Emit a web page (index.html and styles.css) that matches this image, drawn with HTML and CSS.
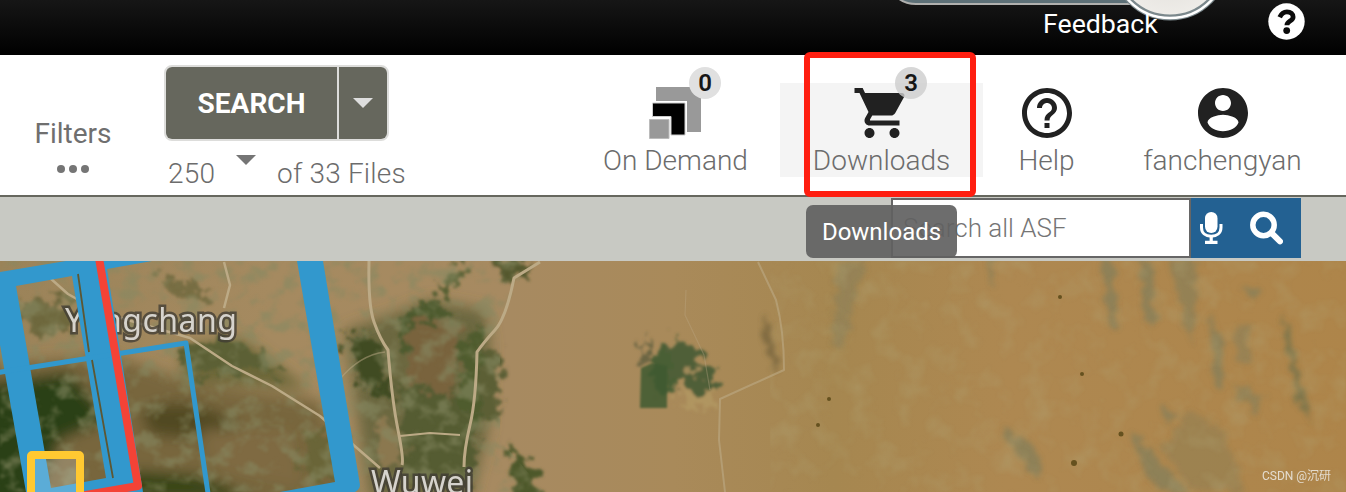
FILE: index.html
```
<!DOCTYPE html>
<html lang="en">

<head>
    <meta charset="UTF-8">
    <meta name="viewport" content="width=device-width, initial-scale=1.0">
    <title>ASF Data Search</title>
    <link rel="stylesheet" href="styles.css">
</head>

<body>
    <div class="topbar">
        <svg class="topbar-art" width="340" height="24" viewBox="890 0 340 24">
            <defs>
                <radialGradient id="knob">
                    <stop offset="0" stop-color="#dedbd6" />
                    <stop offset="1" stop-color="#efede9" />
                </radialGradient>
            </defs>
            <path d="M898 -2Q905 4 916 4H1150V-2Z" fill="#5d7077" stroke="#b0b0ae" stroke-width="2" />
            <circle cx="1170" cy="-39" r="56.500" fill="url(#knob)" stroke="#7b888c" stroke-width="6" />
            <circle cx="1170" cy="-39" r="57" fill="none" stroke="#fff" stroke-width="2.500" />
        </svg>
        <a class="feedback">Feedback</a>
        <svg class="top-help" width="37" height="37" viewBox="0 0 37 37">
            <circle cx="18.500" cy="18.500" r="18.200" fill="#fff" />
            <path d="M11.700 14.200Q14.200 8.800 18.900 8.800C22.800 8.800 25.100 11.200 25.100 14C25.100 18.300 18.900 17.800 18.900 22.300" fill="none" stroke="#0b0b0b" stroke-width="4.800" />
            <circle cx="18.700" cy="27.600" r="3.400" fill="#0b0b0b" />
        </svg>
    </div>

    <header>
        <div class="filters">
            <span>Filters</span>
            <div class="dots"><i></i><i></i><i></i></div>
        </div>
        <div class="search-block">
            <div class="search-btn">
                <button class="search-main">SEARCH</button>
                <button class="search-more"><span class="caret"></span></button>
            </div>
            <div class="file-count">
                <span class="max">250</span>
                <span class="caret caret-dark"></span>
                <span class="total">of 33 Files</span>
            </div>
        </div>
        <nav>
            <a class="nav-item">
                <svg width="60" height="60" viewBox="0 0 60 60">
                    <path d="M10 4H55V49H41V18H10Z" fill="#999" />
                    <path d="M6.500 20H39V52H25V33.500H6.500Z" fill="#000" stroke="#ccc" />
                    <path d="M3.500 36.500H23V55.500H3.500Z" fill="#999" stroke="#bbb" />
                </svg>
                <span class="label">On Demand</span>
                <span class="badge">0</span>
            </a>
            <a class="nav-item active">
                <svg width="60" height="60" viewBox="0 0 24 24" fill="#212121">
                    <path d="M7 18c-1.100 0-1.990.9-1.990 2S5.900 22 7 22s2-.9 2-2-.9-2-2-2zM1 2v2h2l3.600 7.590-1.350 2.450c-.16.28-.25.61-.25.960 0 1.100.9 2 2 2h12v-2H7.420c-.14 0-.25-.11-.25-.25l.03-.12.9-1.630h7.450c.75 0 1.410-.41 1.750-1.030l3.580-6.490c.08-.14.12-.31.12-.48 0-.55-.45-1-1-1H5.210l-.94-2H1zm16 16c-1.100 0-1.990.9-1.990 2s.89 2 1.990 2 2-.9 2-2-.9-2-2-2z" />
                </svg>
                <span class="label">Downloads</span>
                <span class="badge">3</span>
                <span class="marker"></span>
                <span class="tooltip">Downloads</span>
            </a>
            <a class="nav-item">
                <svg width="60" height="60" viewBox="0 0 24 24" fill="#212121">
                    <path d="M11 18h2v-2h-2v2zm1-16C6.480 2 2 6.480 2 12s4.480 10 10 10 10-4.480 10-10S17.520 2 12 2zm0 18c-4.410 0-8-3.590-8-8s3.590-8 8-8 8 3.590 8 8-3.590 8-8 8zm0-14c-2.210 0-4 1.790-4 4h2c0-1.100.9-2 2-2s2 .9 2 2c0 2-3 1.750-3 5h2c0-2.250 3-2.500 3-5 0-2.210-1.790-4-4-4z" />
                </svg>
                <span class="label">Help</span>
            </a>
            <a class="nav-item">
                <svg width="60" height="60" viewBox="0 0 24 24" fill="#212121">
                    <path d="M12 2C6.480 2 2 6.480 2 12s4.480 10 10 10 10-4.480 10-10S17.520 2 12 2zm0 2.800c1.770 0 3.200 1.430 3.200 3.200s-1.430 3.200-3.200 3.200-3.200-1.430-3.200-3.200 1.430-3.200 3.200-3.200zm0 14.500c-3 0-5.500-1.500-6.200-3.500 0-2 4-3.100 6.200-3.100s6.200 1.100 6.200 3.100c-.7 2-3.200 3.500-6.200 3.500z" />
                </svg>
                <span class="label">fanchengyan</span>
            </a>
        </nav>
    </header>

    <div class="subbar">
        <div class="site-search">
            <div class="search-input">Search all ASF</div>
            <div class="search-icons">
                <svg width="24" height="34" viewBox="0 0 24 34">
                    <rect x="6" y="1" width="12.500" height="21" rx="6.200" fill="#fff" />
                    <path d="M2.500 13V16.500C2.500 22 6.500 25.300 12.200 25.300S22 22 22 16.500V13" fill="none" stroke="#fff" stroke-width="3" />
                    <path d="M12.200 25V31M6 31.300H18.500" stroke="#fff" stroke-width="3.200" fill="none" />
                </svg>
                <svg width="34" height="34" viewBox="0 0 34 34" fill="none" stroke="#fff">
                    <circle cx="14.500" cy="14" r="10.700" stroke-width="5.500" />
                    <path d="M22.500 22L31 30.300" stroke-width="6" stroke-linecap="round" />
                </svg>
            </div>
        </div>
    </div>

    <svg class="map" width="1346" height="231" viewBox="0 261 1346 231">
        <defs>
            <linearGradient id="sand">
                <stop offset="0" stop-color="#9b8359" />
                <stop offset=".2" stop-color="#a58a60" />
                <stop offset=".38" stop-color="#a78a61" />
                <stop offset=".5" stop-color="#a98a5a" />
                <stop offset=".62" stop-color="#a68750" />
                <stop offset=".75" stop-color="#ae8851" />
                <stop offset="1" stop-color="#ae854a" />
            </linearGradient>
            <filter id="rough" x="-20%" y="-20%" width="140%" height="140%">
                <feTurbulence type="fractalNoise" baseFrequency=".09" numOctaves="4" seed="4" />
                <feDisplacementMap in="SourceGraphic" scale="34" xChannelSelector="R" yChannelSelector="G" />
                <feGaussianBlur stdDeviation="1.600" />
            </filter>
            <filter id="lake" x="-30%" y="-20%" width="160%" height="140%">
                <feTurbulence type="fractalNoise" baseFrequency=".09" numOctaves="3" seed="9" />
                <feDisplacementMap in="SourceGraphic" scale="16" xChannelSelector="R" yChannelSelector="G" />
                <feGaussianBlur stdDeviation="2.400" />
            </filter>
            <filter id="soft" x="-20%" y="-20%" width="140%" height="140%">
                <feGaussianBlur stdDeviation="7" />
            </filter>
            <!-- dark speckles, used over the fields and hills -->
            <filter id="speckle" x="0" y="0" width="100%" height="100%">
                <feTurbulence type="fractalNoise" baseFrequency=".05 .06" numOctaves="5" seed="21" />
                <feColorMatrix values="0 0 0 0 .24  0 0 0 0 .25  0 0 0 0 .12  4 0 0 0 -1.900" />
                <feGaussianBlur stdDeviation=".9" />
                <feComposite in2="SourceGraphic" operator="in" />
            </filter>
            <filter id="grain" x="0" y="0" width="100%" height="100%">
                <feTurbulence type="fractalNoise" baseFrequency=".04" numOctaves="4" seed="7" />
                <feColorMatrix values="0 0 0 0 .45  0 0 0 0 .4  0 0 0 0 .2  1.500 0 0 0 -.7" />
                <feGaussianBlur stdDeviation="1.200" />
                <feComposite in2="SourceGraphic" operator="in" />
            </filter>
        </defs>

        <rect x="0" y="261" width="1346" height="231" fill="url(#sand)" />

        <!-- hills on the left -->
        <g filter="url(#soft)">
            <path d="M-20 365L110 355 200 385 320 400 360 520H-20Z" fill="#78663e" />
            <path d="M-20 385L70 372 110 420 60 440 30 510H-20Z" fill="#2c3f13" />
            <path d="M140 410Q190 390 240 425L200 440 150 435Z" fill="#514820" />
            <path d="M130 470L200 475 260 500H130Z" fill="#394519" />
            <path d="M200 430H290L300 485 220 470Z" fill="#7f6a42" />
            <path d="M345 330L390 315 430 300 485 310 490 340 488 430 470 500H370Z" fill="#6c673f" />
            <path d="M180 348L240 338 310 390 250 385 185 382Z" fill="#6b6639" />
        </g>

        <!-- farmland -->
        <g filter="url(#rough)">
            <path d="M20 302L75 300 72 332 25 335Z" fill="#6e683c" />
            <path d="M158 275L176 280 215 290 208 300 172 296Z" fill="#776d43" />
            <path d="M180 345L240 340 285 375 250 370 185 378Z" fill="#5b6034" />
            <path d="M345 332L380 340 394 400 360 385Z" fill="#404b23" />
            <path d="M394 325L425 300 448 310 440 345 405 350Z" fill="#4d5a2e" />
            <path d="M460 345L480 325 488 360 485 420 460 435Z" fill="#4f5b2f" />
            <path d="M400 385L455 390 475 430 472 485 410 480Z" fill="#555c33" />
            <path d="M410 325L455 318 460 350 448 395 408 380Z" fill="#79633e" />
            <path d="M480 350L500 352 498 425 480 415Z" fill="#5b5f35" />
            <path d="M495 261H535L515 285 498 272Z" fill="#54592f" />
            <path d="M436 292L458 266 466 268 446 300Z" fill="#575e32" />
            <path d="M508 440L520 455 538 475 535 500H515Z" fill="#4d582c" />
            <path d="M375 420L395 425 400 470 380 460Z" fill="#8b7850" />
            <path d="M305 435L345 425 340 490 300 470Z" fill="#6a6539" />
        </g>
        <path d="M0 261H530L500 320V440L545 492H0Z" fill="#fff" filter="url(#speckle)" opacity=".6" />

        <!-- oasis -->
        <g filter="url(#rough)">
            <path d="M662 350L674 338 692 348 712 368 714 392 700 392 672 385Z" fill="#4f5f38" />
            <path d="M650 358L672 350 676 392 655 395Z" fill="#4a5e35" />
            <path d="M690 365L700 370 698 378 690 376Z" fill="#a08a5a" />
            <path d="M680 392L712 394 714 408 682 410Z" fill="#b09561" />
            <path d="M639 335L652 358 644 360Z" fill="#6a6542" />
        </g>
        <path class="orchard" d="M641 368L652 363 667 366 667 408H640Z" />

        <!-- dry lakes between the dunes -->
        <g filter="url(#lake)" fill="#8b8058" opacity=".9">
            <path d="M838 261H866L852 310 843 348 832 345Z" opacity=".7" />
            <path d="M1100 258H1112L1118 325 1110 326Z" />
            <path d="M1138 258H1152L1156 325 1144 320Z" />
            <path d="M1168 258H1198L1192 345 1182 310Z" opacity=".8" />
            <path d="M1210 315L1224 345 1222 390 1213 380Z" />
            <path d="M1281 315L1290 330 1310 425 1298 405Z" fill="#7a744c" />
            <path d="M1234 325H1250V360H1236Z" opacity=".7" />
            <path d="M985 258H994L994 290Z" />
            <path d="M1005 425L1042 455 1038 478 1005 440Z" />
            <path d="M1128 428L1150 450 1190 495H1168L1145 475Z" />
            <path d="M1155 405L1178 415 1170 425Z" />
            <path d="M1190 412L1225 430 1245 492H1190L1160 445Z" opacity=".5" />
            <path d="M1232 382L1265 395 1260 415 1240 400Z" opacity=".8" />
            <path d="M1240 285L1258 290 1255 300Z" />
        </g>
        <rect x="770" y="261" width="576" height="231" fill="#fff" filter="url(#grain)" opacity=".5" />
        <path d="M762 318L764 315 774 350 778 370 770 368Z" fill="#76643c" filter="url(#lake)" opacity=".8" />
        <g fill="#65511f">
            <circle cx="1074" cy="463" r="3" />
            <circle cx="1121" cy="434" r="2.500" />
            <circle cx="1082" cy="374" r="2" />
            <circle cx="1060" cy="297" r="2" />
            <circle cx="829" cy="399" r="2" />
            <circle cx="818" cy="425" r="2" />
        </g>

        <!-- roads -->
        <g class="roads">
            <path d="M50 278L68 294 100 312 190 338 232 366 272 386 320 416 380 468" stroke-width="2.500" />
            <path d="M224 262L230 285 224 308" stroke-width="2.500" />
            <path d="M369 261Q368 305 374 322T388 350Q392 400 398 430T402 465" stroke-width="3" />
            <path d="M540 262L514 278Q506 318 495 330T477 352Q476 400 470 425T464 467" stroke-width="3" />
            <path d="M400 436L430 433 460 435" stroke-width="2" />
            <path d="M340 379Q360 355 385 352" stroke-width="1.500" opacity=".5" />
            <path d="M758 262L776 300Q784 330 784 370L720 399 719 440 725 492" stroke-width="2" opacity=".6" />
            <path d="M686 290L685 315 704 355 710 390" stroke-width="1.200" opacity=".35" />
        </g>

        <g class="place">
            <text x="65" y="332" textLength="172">Yongchang</text>
            <text x="371" y="494" textLength="102">Wuwei</text>
        </g>

        <!-- scene footprints -->
        <g fill="#3298cd">
            <path fill-rule="evenodd" d="M0 272L66 261H152L107 269 143 492H26L0 345ZM16 286L51 488 106 478 72 276Z" />
            <path d="M297 261H323L360 485Q360 489 355 492H280L335 482Z" />
        </g>
        <path d="M-5 373L186 343 209 500" fill="none" stroke="#3298cd" stroke-width="5" stroke-linejoin="round" />
        <path d="M78 274L89 352M92 360L113 478" stroke="#5d5733" stroke-width="1.800" fill="none" />
        <path d="M99 258L138 486 80 496" fill="none" stroke="#f44336" stroke-width="8" stroke-linejoin="round" />
        <rect x="31" y="455" width="49" height="60" rx="1" fill="#fff" fill-opacity=".2" stroke="#ffc931" stroke-width="8" />

        <text class="watermark" x="1262" y="480" textLength="69">CSDN @沉研</text>
    </svg>
</body>

</html>
```
FILE: styles.css
```
* {
    margin: 0;
    padding: 0;
    box-sizing: border-box;
}

body {
    width: 1346px;
    height: 492px;
    overflow: hidden;
    font-family: Roboto, "Noto Sans CJK SC", sans-serif;
    background-color: #fff;
    color: #757575;
}

/* Top bar */
.topbar {
    position: relative;
    height: 55px;
    background: linear-gradient(#161616, #000);
    display: flex;
    justify-content: flex-end;
    padding-right: 41px;
}

.topbar-art {
    position: absolute;
    left: 890px;
    top: 0;
}

.feedback {
    position: relative;
    width: 225px;
    color: #fff;
    font-size: 26.7px;
    line-height: 49px;
}

.top-help {
    margin-top: 3px;
}

/* Header */
header {
    display: flex;
    height: 142px;
    border-bottom: 2px solid #66675e;
    background-color: #fff;
}

.filters {
    width: 146px;
    padding-top: 63px;
    text-align: center;
    font-size: 28px;
    color: #6f6f6f;
    line-height: 32px;
}

.dots {
    display: flex;
    justify-content: center;
    gap: 4px;
    margin-top: 15px;
}

.dots i {
    width: 8px;
    height: 8px;
    border-radius: 50%;
    background-color: #757575;
}

.search-block {
    margin-left: 18px;
    width: 407px;
    padding-top: 10px;
}

.search-btn {
    display: flex;
    width: 225px;
    height: 76px;
    border: 2px solid #dddddb;
    border-radius: 8px;
    overflow: hidden;
}

.search-btn button {
    border: none;
    background-color: #66675d;
    color: #fff;
    font-family: inherit;
    font-size: 28px;
    font-weight: 700;
}

.search-main {
    width: 171px;
}

.search-btn .search-more {
    flex: 1;
    border-left: 2px solid #dddddb;
    display: flex;
    align-items: center;
    justify-content: center;
}

.caret {
    border: 10px solid transparent;
    border-top-color: #dedede;
    border-bottom: none;
}

.file-count {
    display: flex;
    height: 48px;
    padding-left: 4px;
    font-size: 28px;
    font-weight: 300;
    letter-spacing: .2px;
    color: #6c6c6c;
    line-height: 66px;
}

.max {
    width: 68px;
}

.caret-dark {
    height: 10px;
    margin-top: 14px;
    border-top-color: #757575;
}

.total {
    margin-left: 21px;
}

/* Navigation */
nav {
    display: grid;
    grid-template-columns: 209px 203px 127px 225px;
    height: 94px;
    margin-top: 28px;
}

.nav-item {
    position: relative;
    display: flex;
    flex-direction: column;
    align-items: center;
}

.label {
    height: 34px;
    font-size: 28px;
    font-weight: 300;
    color: #6c6c6c;
    line-height: 36px;
}

.active {
    background-color: #f4f4f4;
}

.badge {
    position: absolute;
    left: 118px;
    top: -16px;
    width: 32px;
    height: 32px;
    border-radius: 50%;
    background-color: #e0e0e0;
    color: #161616;
    font-size: 24px;
    font-weight: 600;
    line-height: 32px;
    text-align: center;
}

.active .badge {
    left: 115px;
    background-color: rgba(205, 205, 205, .8);
}

.marker {
    position: absolute;
    left: 24px;
    top: -31px;
    width: 172px;
    height: 145px;
    border: 6px solid #ff1e10;
    border-radius: 6px;
}

.tooltip {
    position: absolute;
    z-index: 2;
    left: 26px;
    top: 122px;
    width: 151px;
    height: 53px;
    border-radius: 7px;
    background-color: rgba(97, 97, 97, .92);
    color: #fff;
    font-size: 24px;
    line-height: 55px;
    text-align: center;
}

/* Grey bar with site search */
.subbar {
    display: flex;
    justify-content: flex-end;
    height: 64px;
    padding: 1px 45px 3px 0;
    background-color: #c8c9c3;
}

.site-search {
    display: flex;
}

.search-input {
    width: 300px;
    height: 60px;
    padding-left: 10px;
    border: 2px solid #666;
    background-color: #fff;
    font-size: 26px;
    font-weight: 300;
    line-height: 57px;
}

.search-icons {
    display: flex;
    align-items: center;
    gap: 26px;
    width: 110px;
    height: 60px;
    padding-left: 8px;
    background-color: #236192;
}

/* Map */
.map {
    display: block;
}

.orchard {
    fill: #3f5a31;
    opacity: .85;
    filter: blur(1px);
}

.roads path {
    fill: none;
    stroke: #bcaa86;
    stroke-linejoin: round;
}

.place text {
    font-family: "Noto Sans", sans-serif;
    font-size: 32px;
    fill: #d6d3cd;
    stroke: #3d3933;
    stroke-opacity: .75;
    stroke-width: 5px;
    paint-order: stroke;
}

.watermark {
    font-size: 12px;
    fill: #e4dccf;
}
```
